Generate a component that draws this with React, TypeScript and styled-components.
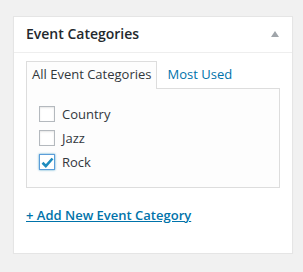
import React from "react";
import styled, { createGlobalStyle } from "styled-components";

const Global = createGlobalStyle`
  html, body { margin: 0; padding: 0; background: #f1f1f1; }
  body { font-family: "Open Sans", "Liberation Sans", sans-serif; color: #444; }
  * { box-sizing: border-box; }
`;

const Page = styled.div`
  padding: 16px 11px 0 13px;
`;

const Card = styled.div`
  width: 280px;
  background: #fff;
  border: 1px solid #e5e5e5;
  box-shadow: 0 1px 1px rgba(0, 0, 0, 0.04);
`;

const Header = styled.div`
  height: 36px;
  display: flex;
  align-items: center;
  justify-content: space-between;
  padding: 0 13px 1px 12px;
  border-bottom: 1px solid #eee;
`;

const Title = styled.h2`
  margin: 0;
  font-size: 14px;
  font-weight: 600;
  color: #23282d;
  line-height: 1.4;
`;

const Toggle = styled.span`
  width: 0;
  height: 0;
  border-left: 4px solid transparent;
  border-right: 4px solid transparent;
  border-bottom: 6px solid #a0a5aa;
`;

const Body = styled.div`
  padding: 8px 12px 28px 12px;
`;

const Tabs = styled.div`
  display: flex;
  align-items: flex-end;
  height: 27px;
  font-size: 13px;
`;

const Tab = styled.div<{ $active?: boolean }>`
  height: ${(p) => (p.$active ? "28px" : "27px")};
  margin-bottom: ${(p) => (p.$active ? "-1px" : "0")};
  margin-left: ${(p) => (p.$active ? "0" : "4px")};
  padding: 3px 5px 0 5px;
  line-height: 18px;
  border: 1px solid ${(p) => (p.$active ? "#ddd" : "transparent")};
  border-bottom: none;
  background: ${(p) => (p.$active ? "#fdfdfd" : "transparent")};
  color: ${(p) => (p.$active ? "#32373c" : "#0073aa")};
  position: relative;
  z-index: 1;
`;

const Panel = styled.div`
  height: 100px;
  border: 1px solid #ddd;
  background: #fdfdfd;
  padding: 17px 12px 0 12px;
`;

const List = styled.ul`
  list-style: none;
  margin: 0;
  padding: 0;
  display: flex;
  flex-direction: column;
  gap: 8px;
`;

const Item = styled.li`
  display: flex;
  align-items: center;
  gap: 7px;
  height: 16px;
  font-size: 13px;
  color: #32373c;
`;

const Box = styled.span<{ $checked?: boolean }>`
  width: 16px;
  height: 16px;
  flex: none;
  background: #fff;
  border: 1px solid ${(p) => (p.$checked ? "#5b9dd9" : "#b4b9be")};
  box-shadow: ${(p) =>
    p.$checked
      ? "0 0 2px rgba(30, 140, 190, 0.8)"
      : "inset 0 1px 2px rgba(0, 0, 0, 0.1)"};
  display: flex;
  align-items: center;
  justify-content: center;
`;

const AddLink = styled.a`
  display: block;
  margin-top: 18px;
  font-size: 13px;
  font-weight: 600;
  line-height: 19px;
  color: #0073aa;
  text-decoration: underline;
`;

const Check = () => (
  <svg width="13" height="11" viewBox="0 0 13 11">
    <path d="M1.5 5.8 L4.8 9 L11.5 1.5" fill="none" stroke="#1e8cbe" strokeWidth="2.6" />
  </svg>
);

const cats = [
  { name: "Country", checked: false },
  { name: "Jazz", checked: false },
  { name: "Rock", checked: true },
];

export default function App() {
  return (
    <Page>
      <Global />
      <Card>
        <Header>
          <Title>Event Categories</Title>
          <Toggle />
        </Header>
        <Body>
          <Tabs>
            <Tab $active>All Event Categories</Tab>
            <Tab>Most Used</Tab>
          </Tabs>
          <Panel>
            <List>
              {cats.map((c) => (
                <Item key={c.name}>
                  <Box $checked={c.checked}>{c.checked && <Check />}</Box>
                  {c.name}
                </Item>
              ))}
            </List>
          </Panel>
          <AddLink href="#">+ Add New Event Category</AddLink>
        </Body>
      </Card>
    </Page>
  );
}
